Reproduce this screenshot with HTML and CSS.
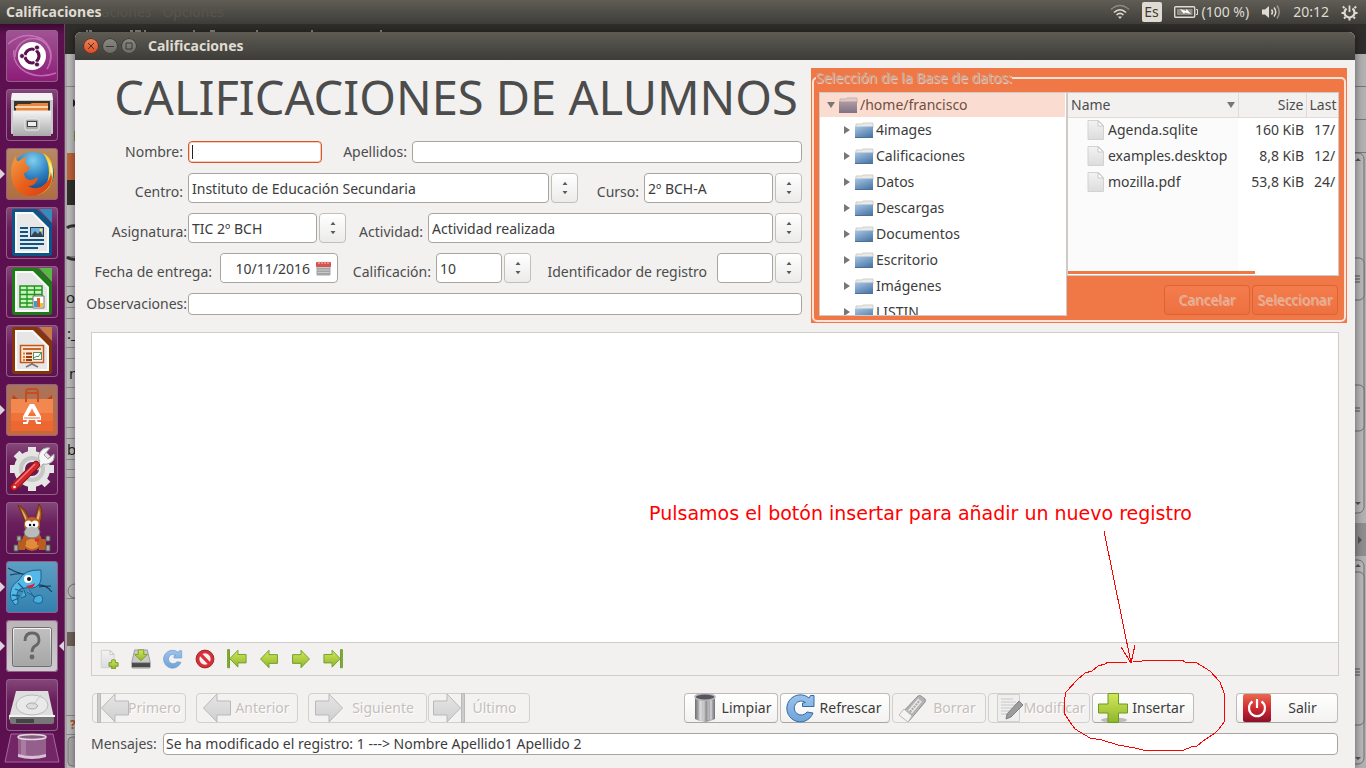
FILE: index.html
```html
<!DOCTYPE html>
<html lang="es">
<head>
<meta charset="utf-8">
<title>Calificaciones</title>
<link rel="stylesheet" href="styles.css">
</head>
<body>
<svg class="defs" aria-hidden="true">
  <defs>
    <linearGradient id="gFolder" x1="0" y1="0" x2="0.6" y2="1"><stop offset="0" stop-color="#a9c6e2"/><stop offset="1" stop-color="#4f7bab"/></linearGradient>
    <linearGradient id="gFolderSel" x1="0" y1="0" x2="0" y2="1"><stop offset="0" stop-color="#b09aa2"/><stop offset="1" stop-color="#7f7382"/></linearGradient>
    <linearGradient id="gFile" x1="0" y1="0" x2="0" y2="1"><stop offset="0" stop-color="#f3f3f3"/><stop offset="1" stop-color="#dcdcdc"/></linearGradient>
    <linearGradient id="gGreen" x1="0" y1="0" x2="0" y2="1"><stop offset="0" stop-color="#d2e85c"/><stop offset="1" stop-color="#8fb52b"/></linearGradient>
    <linearGradient id="gGrey" x1="0" y1="0" x2="0" y2="1"><stop offset="0" stop-color="#e6e6e6"/><stop offset="1" stop-color="#cfcfcf"/></linearGradient>
    <linearGradient id="gBlue" x1="0" y1="0" x2="0" y2="1"><stop offset="0" stop-color="#9dc3ea"/><stop offset="1" stop-color="#6fa3da"/></linearGradient>
    <linearGradient id="gMetal" x1="0" y1="0" x2="1" y2="0"><stop offset="0" stop-color="#6c6c72"/><stop offset="0.3" stop-color="#d8d8da"/><stop offset="0.6" stop-color="#8d8d92"/><stop offset="0.8" stop-color="#c2c2c6"/><stop offset="1" stop-color="#707076"/></linearGradient>
    <linearGradient id="gSilver" x1="0" y1="0" x2="0" y2="1"><stop offset="0" stop-color="#f4f4f4"/><stop offset="1" stop-color="#a9a9a9"/></linearGradient>
    <linearGradient id="gRed" x1="0" y1="0" x2="0" y2="1"><stop offset="0" stop-color="#e86a52"/><stop offset="0.5" stop-color="#d02a30"/><stop offset="1" stop-color="#8c0f2a"/></linearGradient>
    <linearGradient id="gFox" x1="0" y1="0" x2="1" y2="1"><stop offset="0" stop-color="#f0a045"/><stop offset="0.5" stop-color="#e9601c"/><stop offset="1" stop-color="#d83a10"/></linearGradient>
    <radialGradient id="gGlobe" cx="0.5" cy="0.2" r="0.8"><stop offset="0" stop-color="#7fd0ee"/><stop offset="0.5" stop-color="#2a7fc0"/><stop offset="1" stop-color="#153a7a"/></radialGradient>
    <symbol id="folder" viewBox="0 0 20 17"><path d="M2 6V2h6l1-1h10v5z" fill="#e9e9e7" stroke="#cfcfcc" stroke-width="1"/><path d="M1 4.500h18V16H1z" fill="url(#gFolder)"/><path d="M1 15.500h18" stroke="#4c6f99"/></symbol>
    <symbol id="folder-sel" viewBox="0 0 20 17"><path d="M2 6V2h6l1-1h10v5z" fill="#dccac6" stroke="#c7b2b0"/><path d="M1 4.500h18V16H1z" fill="url(#gFolderSel)"/></symbol>
    <symbol id="file" viewBox="0 0 17 20"><path d="M1 .5h10.500l5 5v14H1z" fill="url(#gFile)" stroke="#d2d2d2"/><path d="M11 1v5h5.500z" fill="#fff" stroke="#c8c8c8"/></symbol>
    <symbol id="spin" viewBox="0 0 8 14"><path d="M1.500 4L4 .8 6.500 4z" fill="#5c5c5c"/><path d="M1.500 10L4 13.200 6.500 10z" fill="#5c5c5c"/></symbol>
    <symbol id="arrow-l" viewBox="0 0 30 30"><path d="M1.500 15L15 1v7h13.500v14H15v7z"/></symbol>
    <symbol id="arrow-r" viewBox="0 0 30 30"><path d="M28.500 15L15 1v7H1.500v14H15v7z"/></symbol>
    <symbol id="refresh" viewBox="0 0 30 30"><path d="M23 5l1.500-2.500H28V13.500H16.500V10l3-.5A7 7 0 1 0 21 19l6 1A13.500 13.500 0 1 1 23 5z"/></symbol>
  </defs>
</svg>

<header class="panel">
  <span class="panel-title">Calificaciones</span>
  <span class="panel-menu" aria-hidden="true">aciones &nbsp; Opciones</span>
  <div class="indicators">
    <svg width="20" height="16" viewBox="0 0 20 16" fill="none" stroke="#dfdbd2" stroke-width="1.600"><path d="M1 5.500Q10-2.500 19 5.500" opacity=".4"/><path d="M4 8.500Q10 3 16 8.500"/><path d="M6.500 11Q10 7.800 13.500 11"/><path d="M8 12.500h4L10 15z" fill="#dfdbd2" stroke="none"/></svg>
    <span class="keyboard">Es</span>
    <span class="battery"><svg width="24" height="14" viewBox="0 0 24 14"><rect x=".7" y="1.700" width="20" height="10.600" rx="1" fill="none" stroke="#dfdbd2" stroke-width="1.400"/><rect x="3" y="4" width="15.500" height="6" fill="#8d8b84"/><path d="M22 4.500h1.500v5H22" fill="none" stroke="#dfdbd2"/><path d="M6 4l6 2 .5-2L17 9l-6-1.500L10 9z" fill="#fff"/></svg>(100 %)</span>
    <svg width="20" height="16" viewBox="0 0 20 16"><path d="M1 5.500h3L8 2v12l-4-3.500H1z" fill="#dfdbd2"/><g fill="none" stroke="#dfdbd2" stroke-width="1.500"><path d="M10.500 5.500q2 2.500 0 5"/><path d="M13 3.500q3.500 4.500 0 9"/><path d="M16 1.500q4.500 6.500 0 13" opacity=".5"/></g></svg>
    <time>20:12</time>
    <svg width="17" height="17" viewBox="0 0 17 17" fill="none" stroke="#dfdbd2"><path d="M5.500 4.500a5 5 0 1 0 6 0" stroke-width="2.200"/><path d="M8.500 1.500v6.500" stroke-width="1.800"/><path d="M3.500 4L1.800 2.500M13.500 4l1.700-1.500M3 9H.5M14 9h2.500M4.500 13L3 14.500M12.500 13l1.500 1.500M8.500 14v2.500" stroke-width="2"/></svg>
  </div>
</header>

<div class="desktop">
  <nav class="launcher" aria-label="Lanzador">
    <button class="tile dash" aria-label="Inicio"><svg viewBox="0 0 52 52"><g fill="none" stroke="#d488c4" stroke-width="1.500" opacity=".7"><path d="M9 27a18 18 0 0 1 31-13q9 12 1 25"/><path d="M2 14q16-14 34-5 12 9 8 23"/><path d="M50 43q-16 6-30-1Q6 34 8 20"/></g><circle cx="26" cy="26" r="14" fill="#fff"/><circle cx="26" cy="26" r="7" fill="none" stroke="#5e1150" stroke-width="3.200"/><path d="M26 26L15 26M26 26L31 17M26 26L31 35" stroke="#fff" stroke-width="1.500"/><circle cx="26" cy="26" r="5" fill="#fff"/><g fill="#5e1150" stroke="#fff" stroke-width=".8"><circle cx="16" cy="26" r="2.500"/><circle cx="31" cy="17.500" r="2.500"/><circle cx="31" cy="34.500" r="2.500"/></g></svg></button>
    <button class="tile" aria-label="Archivos"><svg viewBox="0 0 52 52"><path d="M6 4h40l1 8v32q0 1-1 1H6q-1 0-1-1V12z" fill="#c9c9c9"/><path d="M6 4h40l1 7H5z" fill="#f2f2f2"/><path d="M8 12h36v11H8z" fill="#373430"/><path d="M10 17l2-2h12l2-1h16v9H10z" fill="#e8863c"/><path d="M9 18h33" stroke="#fff0d5" stroke-width="1.500"/><path d="M7 22h38v25H7z" fill="url(#gSilver)"/><path d="M7 22h38" stroke="#eee"/><rect x="19" y="30" width="14" height="11" rx="2" fill="#aaa" stroke="#eee"/><rect x="21.500" y="32.500" width="9" height="5" fill="#eee" stroke="#444"/></svg></button>
    <button class="tile tan running" aria-label="Firefox"><svg viewBox="0 0 52 52"><circle cx="27" cy="25" r="21" fill="url(#gGlobe)"/><path d="M37 5q11 6 10 22-1 16-16 20 12-9 12-22 0-12-6-20z" fill="#f9d038"/><path d="M42 12q8 10 2 22 2-12-2-22z" fill="#fff6a0"/><path d="M10 8q-1 5 3 5 3-3 8-4-3 4-1 7 1 2 4 3-2 5-6 6 0 5 5 7 5 0 8-3 2 2-1 5-2 4-8 4 10 6 19-4 3-3 4-10 3 10-4 17-7 7-16 7-13 0-18-12Q2 19 10 8z" fill="url(#gFox)"/></svg></button>
    <button class="tile" aria-label="LibreOffice Writer"><svg viewBox="0 0 52 52"><path d="M8 2h23l15 15v29q0 3-3 3H9q-3 0-3-3V4q0-2 2-2z" fill="#0d5584"/><path d="M33 2h13v14z" fill="#338dbc"/><path d="M9 5h18l16 16v25H9z" fill="#fafafa"/><path d="M11 7h15l15 15v22H11z" fill="#e8e8e8"/><path d="M14 21h8M14 25h8M14 29h8M14 33h24M14 37h24M14 41h18" stroke="#0d5584" stroke-width="1.800"/><rect x="24.500" y="20.500" width="13" height="9" fill="#6db2de" stroke="#263c55"/><path d="M25 29l4-5 3 3 2-3 3 5z" fill="#34434c"/><circle cx="35" cy="23" r="1.500" fill="#ffe14b"/></svg></button>
    <button class="tile" aria-label="LibreOffice Calc"><svg viewBox="0 0 52 52"><path d="M8 2h23l15 15v29q0 3-3 3H9q-3 0-3-3V4q0-2 2-2z" fill="#1c7d14"/><path d="M33 2h13v14z" fill="#55b944"/><path d="M9 5h18l16 16v25H9z" fill="#fafafa"/><path d="M11 7h15l15 15v22H11z" fill="#e6e6e6"/><path d="M14 20h22v21H14z" fill="#c8f5b8" stroke="#1e9320" stroke-width="1.500"/><path d="M14 24h22M14 28.500h22M14 33h22M14 37h22M21 20v21M28.500 20v21" stroke="#1e9320" stroke-width="1.300"/><path d="M27 30h11v12H27z" fill="#fff" stroke="#777"/><path d="M28 35h3v6h-3z" fill="#2fa0e0"/><path d="M31 32h3v9h-3z" fill="#e66020"/><path d="M34 37h3v4h-3z" fill="#f5c22a"/></svg></button>
    <button class="tile" aria-label="LibreOffice Impress"><svg viewBox="0 0 52 52"><path d="M8 2h23l15 15v29q0 3-3 3H9q-3 0-3-3V4q0-2 2-2z" fill="#853509"/><path d="M33 2h13v14z" fill="#c67b45"/><path d="M9 5h18l16 16v25H9z" fill="#fafafa"/><path d="M11 7h15l15 15v22H11z" fill="#e6e6e6"/><rect x="14.500" y="20.500" width="23" height="17" fill="#fbe6d4" stroke="#c4561c" stroke-width="1.500"/><path d="M17 24h18" stroke="#c4561c" stroke-width="1.800"/><path d="M17 28.500h2M17 32h2M17 35h2" stroke="#e47a38" stroke-width="2"/><path d="M20 28.500h6M20 32h6M20 35h6" stroke="#9c3b0c" stroke-width="1.800"/><rect x="27.500" y="27.500" width="8" height="7" fill="#fff" stroke="#668a66"/><path d="M28 33l3-2 1 1 3-4" stroke="#21a038" fill="none"/><path d="M26 38v2M26 39l-6 3M26 39l6 3" stroke="#777" stroke-width="1.800"/></svg></button>
    <button class="tile orange running" aria-label="Software de Ubuntu"><svg viewBox="0 0 52 52"><path d="M7 11l5 4h29l5-4v6H6z" fill="#b7441c"/><path d="M5 15h42v32H5z" fill="#f0713a"/><path d="M5 15h42v14H5z" fill="#f28750"/><path d="M5 37h42v10H5z" fill="#ee6730"/><path d="M20 18V9q0-4 3-4h6q3 0 3 4v9M20 9h12" stroke="#c54d24" stroke-width="2" fill="none"/><path d="M19 33L25 22h2l6 11" fill="none" stroke="#fff" stroke-width="4"/><path d="M17 34h18" stroke="#fff" stroke-width="4"/><path d="M18 34h16" stroke="#f0713a"/><path d="M17 39h4l1-3M35 39h-4l-1-3" stroke="#fff" stroke-width="2" fill="none"/></svg></button>
    <button class="tile" aria-label="Configuración del sistema"><svg viewBox="0 0 52 52"><g stroke="#e5e5e4" stroke-width="8"><path d="M26 4v11M26 37v11M4 26h11M37 26h11M10.500 10.500l7 7M34.500 34.500l7 7M10.500 41.500l7-7M34.500 17.500l7-7"/></g><circle cx="26" cy="26" r="12.500" fill="none" stroke="#e5e5e4" stroke-width="11"/><circle cx="26" cy="26" r="11" fill="none" stroke="#c6c6c5" stroke-width="4"/><path d="M28 25l6-6q-4-7 3-13 4-2 7-1l-6 7 4 4 6-5q1 7-4 9-4 2-7 1l-5 6z" fill="#f7f7f7" stroke="#a6a6a6"/><path d="M8 44L30 22" stroke="#8a0f16" stroke-width="8" stroke-linecap="round"/><path d="M8 44L30 22" stroke="#d6262c" stroke-width="6" stroke-linecap="round"/><path d="M9 41L29 21" stroke="#f08080" stroke-width="1.500"/><circle cx="8.500" cy="44" r="1.300" fill="#fff"/></svg></button>
    <button class="tile" aria-label="aMule"><svg viewBox="0 0 52 52"><path d="M20 22L12 3q8 3 12 17zM28 20L33 2q6 8 0 21z" fill="#a9581f" stroke="#6b330d"/><path d="M20 19L15 7q4 4 6 11zM30 19l3-12q2 6-1 12z" fill="#e0b68c"/><ellipse cx="26" cy="39" rx="10" ry="10" fill="#bc5f22"/><ellipse cx="26" cy="42" rx="7" ry="5" fill="#e08c3e"/><path d="M12 37h8v6h-8zM31 37h9v6h-9zM9 43h10v5H9zM33 43h10v5H33z" fill="#b85c20"/><path d="M11 34h4v5h-4zM40 34h4v5h-4zM8 43h4v6H8zM40 43h4v6h-4z" fill="#aaa" stroke="#555"/><ellipse cx="26" cy="23" rx="8" ry="8" fill="#bc5f22"/><path d="M22 23h9l3 7q-1 6-8 6t-8-6z" fill="#bbb" stroke="#777"/><circle cx="22.500" cy="22" r="3.500" fill="#fff"/><circle cx="29" cy="22" r="3.500" fill="#fff"/><circle cx="24" cy="23" r="1.200"/><circle cx="28" cy="23" r="1.200"/><ellipse cx="31" cy="38" rx="2.500" ry="1.800" fill="#dc2935"/></svg></button>
    <button class="tile blue running" aria-label="Gambas"><svg viewBox="0 0 52 52"><path d="M2 7q14 8 28 8M4 14q12-3 22 1M30 24q10-1 16 7M33 26q8-1 12-1" fill="none" stroke="#113e57" stroke-width="1.100"/><path d="M35 9q-17-1-22 10Q2 26 5 38l4 6q4-1 3-4-3-8 2-12 6-2 12-1 8-1 9-9z" fill="#55b8e6" stroke="#18638f"/><path d="M9 28l8 3M6 34l8 1M12 22l6 6M6 40l7-3" stroke="#18638f" stroke-width="1.300"/><path d="M18 29l2 6-5 2M23 29l5 7 6-2q4 2 2 7-4 3-9-1l2-4-8-5" fill="#4aaedc" stroke="#18638f"/><circle cx="22" cy="18" r="4" fill="#fff"/><circle cx="23" cy="18" r="2" fill="#111"/><path d="M20 25q5 0 9-3-1 5-6 5z" fill="#e3202a"/></svg></button>
    <button class="tile light running active" aria-label="Calificaciones"><svg viewBox="0 0 52 52"><rect x="6.500" y="7.500" width="39" height="39" rx="2" fill="url(#gSilver)" stroke="#6e6e6e"/><rect x="8" y="9" width="36" height="36" fill="#a5a5a5" opacity=".65"/><path d="M19 21q0-8 7-8t7 7q0 4-4 6-3 2-3 6" fill="none" stroke="#666" stroke-width="2.800"/><circle cx="26" cy="37" r="2.400" fill="#666"/></svg></button>
    <button class="tile" aria-label="Disco"><svg viewBox="0 0 52 52"><path d="M10 12h32l6 27-2 5H5l-2-5z" fill="#dedede"/><path d="M4 38h44v5q0 2-2 2H6q-2 0-2-2z" fill="#777"/><path d="M3 36h46v2H3z" fill="#f4f4f4"/><path d="M10 40h18v4H10z" fill="#444"/><ellipse cx="26" cy="26" rx="16" ry="10" fill="#e9e9e9" stroke="#bbb"/><ellipse cx="26" cy="27" rx="5.500" ry="3" fill="#ddd" stroke="#aaa"/><path d="M35 16l-8 10" stroke="#c6c6c6"/></svg></button>
    <button class="trash" aria-label="Papelera"><svg viewBox="0 0 56 30"><path d="M7 1h42l6 28H1z" fill="#742566" stroke="#a4679a"/><path d="M14 4h28v19q-14 4-28 0z" fill="#955f8c"/><path d="M17 6h5v16h-5z" fill="#ab7ba3"/><ellipse cx="28" cy="4" rx="14" ry="2.500" fill="#8a5a84" stroke="#ddd" stroke-width="1.500"/><path d="M14 21q14 4 28 0v3q-14 4-28 0z" fill="#d6c2d4"/></svg></button>
  </nav>

  <div class="workspace">
    <svg class="behind behind-left" width="12" height="744" aria-hidden="true">
      <rect y="30" width="12" height="714" fill="#bdbdbd"/><path d="M1 30v714" stroke="#8f8f8f"/><path d="M0 62.500h12M1 232.500h11M1 262.500h11M1 283.500h11M1 294.500h11M1 323.500h11M1 334.500h11M1 363.500h11M1 374.500h11M1 403.500h11M1 414.500h11M1 435.500h11M1 445.500h11M1 453.500h11M1 574.500h11M1 691.500h11M1 710.500h11" stroke="#8b8b8b"/>
      <path d="M8 75l4 4-4 4z" fill="#222"/><rect x="9" y="107" width="3" height="10" fill="#7aa042"/><rect x="2" y="129" width="10" height="27" fill="#bf6339"/><rect x="2" y="156" width="10" height="25" fill="#31302c"/><path d="M12 202q-7-1-10 2M12 235q-7 1-10-2" stroke="#333" stroke-width="3" fill="none"/><circle cx="10" cy="567" r="7" fill="none" stroke="#777"/><rect x="2" y="608" width="8" height="14" fill="#71615a"/><rect x="3" y="713" width="14" height="29" rx="4" fill="#aaa" stroke="#777"/>
      <g class="behind-text"><text x="1" y="279">o</text><text x="2" y="315">:_</text><text x="4" y="355">n</text><text x="2" y="431">b</text></g><text x="5" y="705" class="behind-mark">?</text>
    </svg>
    <svg class="behind behind-right" width="12" height="744" aria-hidden="true">
      <rect y="30" width="12" height="714" fill="#b2b2b2"/><path d="M0 62.500h12M0 95.500h12M0 128.500h12M0 499.500h12" stroke="#777"/><rect y="499" width="12" height="33" fill="#8e8e8e"/><g fill="#b8b8b8" stroke="#6f6f6f"><rect x="-6" y="129" width="16" height="360" rx="6"/><rect x="-6" y="234" width="16" height="42" rx="5"/><rect x="-6" y="361" width="16" height="46" rx="5"/><rect x="-6" y="536" width="16" height="204" rx="6"/><rect x="-6" y="548" width="16" height="153" rx="5"/></g><path d="M1 252h5M1 255h5M1 258h5M1 384h5M1 387h5M1 645h5M1 648h5M1 651h5" stroke="#555"/><path d="M1 137h6l-3-3zM1 478h6l-3 3zM4 512v8l4-4zM1 543h6l-3-3zM1 733h6l-3 3z" fill="#555"/>
    </svg>
    <svg class="behind behind-title" width="400" height="8" aria-hidden="true"><path d="M21 7h2M24 7h3M65 7h3M70 7h6M79 7h2M128 7h2M145 7h5M191 7h2M246 7h2M315 7h2" stroke="#918f88" stroke-width="2"/></svg>

    <main class="window">
      <div class="titlebar">
        <button class="wm close" aria-label="Cerrar"><svg viewBox="0 0 16 16"><path d="M5 5l6 6M11 5l-6 6"/></svg></button>
        <button class="wm" aria-label="Minimizar"><svg viewBox="0 0 16 16"><path d="M4 8.500h8"/></svg></button>
        <button class="wm" aria-label="Maximizar"><svg viewBox="0 0 16 16"><path d="M5 5h6v6H5z"/></svg></button>
        <span class="window-title">Calificaciones</span>
      </div>

      <div class="top">
        <form class="form">
          <h1>CALIFICACIONES DE ALUMNOS</h1>
          <div class="row">
            <label class="first" for="nombre">Nombre:</label>
            <span class="focus w-name"><input id="nombre"></span>
            <label class="l-apellidos" for="apellidos">Apellidos:</label>
            <input class="grow" id="apellidos">
          </div>
          <div class="row tall">
            <label class="first" for="centro">Centro:</label>
            <span class="combo grow"><input id="centro" value="Instituto de Educación Secundaria"><button type="button" aria-label="Elegir centro"><svg><use href="#spin"/></svg></button></span>
            <label class="l-curso" for="curso">Curso:</label>
            <span class="combo w-combo"><input id="curso" value="2º BCH-A"><button type="button" aria-label="Elegir curso"><svg><use href="#spin"/></svg></button></span>
          </div>
          <div class="row tall">
            <label class="first tight" for="asignatura">Asignatura:</label>
            <span class="combo w-combo"><input id="asignatura" value="TIC 2º BCH"><button type="button" aria-label="Elegir asignatura"><svg><use href="#spin"/></svg></button></span>
            <label class="l-actividad" for="actividad">Actividad:</label>
            <span class="combo grow"><input id="actividad" value="Actividad realizada"><button type="button" aria-label="Elegir actividad"><svg><use href="#spin"/></svg></button></span>
          </div>
          <div class="row tall">
            <label class="l-fecha" for="fecha">Fecha de entrega:</label>
            <span class="date"><input id="fecha" value="10/11/2016"><button type="button" aria-label="Calendario"><svg width="15" height="15" viewBox="0 0 15 15"><rect x=".5" y="1" width="14" height="13.500" rx="1" fill="#a5a5a5"/><path d="M1.500 6.500h12M1.500 9h12M1.500 11.500h12" stroke="#c9c9c9"/><rect width="15" height="5" rx="1" y="1" fill="#d4544f"/><path d="M3 0v3M6 0v3M9 0v3M12 0v3" stroke="#f3c9c6"/></svg></button></span>
            <label class="l-calif" for="calif">Calificación:</label>
            <span class="combo w-calif"><input id="calif" value="10"><button type="button" aria-label="Elegir calificación"><svg><use href="#spin"/></svg></button></span>
            <label class="l-ident" for="ident">Identificador de registro</label>
            <span class="combo grow"><input id="ident"><button type="button" aria-label="Elegir registro"><svg><use href="#spin"/></svg></button></span>
          </div>
          <div class="row">
            <label class="first tight" for="obs">Observaciones:</label>
            <input class="grow" id="obs">
          </div>
        </form>

        <section class="chooser">
          <fieldset>
            <legend>Selección de la Base de datos:</legend>
            <div class="panes">
              <ul class="tree">
                <li class="root"><svg class="tri" viewBox="0 0 8 8"><path d="M0 1h8L4 7z"/></svg><svg class="folder"><use href="#folder-sel"/></svg>/home/francisco</li>
                <li><svg class="tri" viewBox="0 0 8 8"><path d="M1 0v8l6-4z"/></svg><svg class="folder"><use href="#folder"/></svg>4images</li>
                <li><svg class="tri" viewBox="0 0 8 8"><path d="M1 0v8l6-4z"/></svg><svg class="folder"><use href="#folder"/></svg>Calificaciones</li>
                <li><svg class="tri" viewBox="0 0 8 8"><path d="M1 0v8l6-4z"/></svg><svg class="folder"><use href="#folder"/></svg>Datos</li>
                <li><svg class="tri" viewBox="0 0 8 8"><path d="M1 0v8l6-4z"/></svg><svg class="folder"><use href="#folder"/></svg>Descargas</li>
                <li><svg class="tri" viewBox="0 0 8 8"><path d="M1 0v8l6-4z"/></svg><svg class="folder"><use href="#folder"/></svg>Documentos</li>
                <li><svg class="tri" viewBox="0 0 8 8"><path d="M1 0v8l6-4z"/></svg><svg class="folder"><use href="#folder"/></svg>Escritorio</li>
                <li><svg class="tri" viewBox="0 0 8 8"><path d="M1 0v8l6-4z"/></svg><svg class="folder"><use href="#folder"/></svg>Imágenes</li>
                <li><svg class="tri" viewBox="0 0 8 8"><path d="M1 0v8l6-4z"/></svg><svg class="folder"><use href="#folder"/></svg>LISTIN</li>
              </ul>
              <div class="side">
                <div class="files">
                  <table>
                    <colgroup><col class="c-name"><col class="c-size"><col class="c-last"></colgroup>
                    <thead><tr><th><span class="sort">Name <svg class="tri" viewBox="0 0 8 8"><path d="M0 1h8L4 7z"/></svg></span></th><th class="num">Size</th><th>Last</th></tr></thead>
                    <tbody>
                      <tr><td><span class="entry"><svg class="file"><use href="#file"/></svg>Agenda.sqlite</span></td><td class="num">160 KiB</td><td class="last">17/</td></tr>
                      <tr><td><span class="entry"><svg class="file"><use href="#file"/></svg>examples.desktop</span></td><td class="num">8,8 KiB</td><td class="last">12/</td></tr>
                      <tr><td><span class="entry"><svg class="file"><use href="#file"/></svg>mozilla.pdf</span></td><td class="num">53,8 KiB</td><td class="last">24/</td></tr>
                      <tr class="rest"><td></td><td></td><td></td></tr>
                    </tbody>
                  </table>
                  <div class="scroll"></div>
                </div>
                <div class="actions"><button disabled>Cancelar</button><button disabled>Seleccionar</button></div>
              </div>
            </div>
          </fieldset>
        </section>
      </div>

      <section class="records">
        <div class="grid"></div>
        <div class="toolbar">
          <button aria-label="Nuevo"><svg viewBox="0 0 22 22"><path d="M2.500 1.500h10l4 4v15h-14z" fill="url(#gFile)" stroke="#d0d0d0"/><path d="M12 2v4h4.500z" fill="#fff" stroke="#c5c5c5"/><path d="M14 12h4v3h3v4h-3v3h-4v-3h-3v-4h3z" fill="url(#gGreen)" stroke="#6f9620"/></svg></button>
          <button aria-label="Guardar"><svg viewBox="0 0 22 22"><path d="M4 1h14l3 13v6q0 1-1 1H2q-1 0-1-1v-6z" fill="#c9c9c9" stroke="#999"/><path d="M1 15h20v5H1z" fill="#4a4a4a"/><path d="M2 15h18" stroke="#999"/><path d="M8 1h6v5h4l-7 7-7-7h4z" fill="url(#gGreen)" stroke="#7a9e28"/></svg></button>
          <button aria-label="Refrescar"><svg viewBox="0 0 30 30" fill="url(#gBlue)" stroke="#6b9cd0"><use href="#refresh" width="30" height="30"/></svg></button>
          <button aria-label="Cancelar"><svg viewBox="0 0 22 22"><circle cx="11" cy="11" r="9.800" fill="#d83038" stroke="#9c1a22"/><circle cx="11" cy="11" r="6.200" fill="#f6f0f0"/><path d="M6 6l10 10" stroke="#d83038" stroke-width="3.500"/></svg></button>
          <button aria-label="Primero"><svg viewBox="0 0 32 32" fill="url(#gGreen)" stroke="#6f9c28" stroke-width="1.500"><path d="M1 1h3v29H1z" fill="#83ad3a"/><use href="#arrow-l" x="3" y="1" width="29" height="29"/></svg></button>
          <button aria-label="Anterior"><svg viewBox="0 0 32 32" fill="url(#gGreen)" stroke="#6f9c28" stroke-width="1.500"><use href="#arrow-l" x="1" y="1" width="30" height="30"/></svg></button>
          <button aria-label="Siguiente"><svg viewBox="0 0 32 32" fill="url(#gGreen)" stroke="#6f9c28" stroke-width="1.500"><use href="#arrow-r" x="1" y="1" width="30" height="30"/></svg></button>
          <button aria-label="Último"><svg viewBox="0 0 32 32" fill="url(#gGreen)" stroke="#6f9c28" stroke-width="1.500"><path d="M28 1h3v29h-3z" fill="#83ad3a"/><use href="#arrow-r" y="1" width="29" height="29"/></svg></button>
        </div>
      </section>

      <div class="commands">
        <div class="nav-group">
          <button class="cmd w-s" disabled><svg viewBox="0 0 30 30" fill="url(#gGrey)" stroke="#b9b9b9"><path d="M-.5.500h3v29h-3z" fill="#ccc"/><use href="#arrow-l" x="2" width="30" height="30"/></svg><span>Primero</span></button>
          <button class="cmd" disabled><svg viewBox="0 0 30 30" fill="url(#gGrey)" stroke="#b9b9b9"><use href="#arrow-l" width="30" height="30"/></svg><span>Anterior</span></button>
          <button class="cmd w-l" disabled><svg viewBox="0 0 30 30" fill="url(#gGrey)" stroke="#b9b9b9"><use href="#arrow-r" width="30" height="30"/></svg><span>Siguiente</span></button>
          <button class="cmd joined" disabled><svg viewBox="0 0 30 30" fill="url(#gGrey)" stroke="#b9b9b9"><path d="M27.500.500h3v29h-3z" fill="#ccc"/><use href="#arrow-r" x="-2" width="30" height="30"/></svg><span>Último</span></button>
        </div>
        <div class="edit-group">
          <button class="cmd w-s"><svg viewBox="0 0 30 30"><path d="M5 4h20v22q-10 6-20 0z" fill="url(#gMetal)"/><path d="M10 7v20M14 8v20M18 8v19M21 7v19" stroke="#f0f0f2" opacity=".5"/><ellipse cx="15" cy="4" rx="10" ry="3.200" fill="#55555b" stroke="#b5b5b9" stroke-width="1.500"/></svg><span>Limpiar</span></button>
          <button class="cmd w-m"><svg viewBox="0 0 30 30" fill="url(#gBlue)" stroke="#2f6cab"><use href="#refresh" width="30" height="30"/></svg><span>Refrescar</span></button>
          <button class="cmd w-s" disabled><svg viewBox="0 0 30 30"><path d="M20 3q2-1 3 0l4 3q1 1 0 3L11 28l-9-6z" fill="#b4b4b4" stroke="#909090"/><path d="M1 22l5-6 8 7-4 6z" fill="#f4f4f4" stroke="#bbb"/><path d="M12 19L22 7" stroke="#e8e8e8" stroke-width="5"/><path d="M12 19L22 7" stroke="#aaa" stroke-width="2" stroke-dasharray="2 1"/></svg><span>Borrar</span></button>
          <button class="cmd" disabled><svg viewBox="0 0 30 30"><path d="M3.500 1.500h22v27h-22z" fill="#efefef" stroke="#d0d0d0"/><path d="M7 6h12M7 9h15M7 12h15M7 15h12M7 18h9M7 21h7" stroke="#c8c8c8"/><path d="M25 8l4 4-12 12-5 2 1-5z" fill="#9c9c9c" stroke="#808080"/></svg><span>Modificar</span></button>
          <button class="cmd"><svg viewBox="0 0 30 30"><ellipse cx="16" cy="27" rx="13" ry="2.500" fill="#bbb"/><path d="M10 .5h10.500V11H29.500v9h-9v9.500H10V20H.5v-9H10z" fill="url(#gGreen)" stroke="#6b9a20"/></svg><span>Insertar</span></button>
          <button class="cmd exit"><svg viewBox="0 0 30 30"><rect x="1" y="1" width="28" height="28" rx="2" fill="url(#gRed)"/><path d="M10.500 8.500a8 8 0 1 0 9 0" fill="none" stroke="#fff" stroke-width="2.200"/><path d="M15 6v9" stroke="#fff" stroke-width="2.200"/></svg><span>Salir</span></button>
        </div>
      </div>

      <div class="messages">
        <label for="mensajes">Mensajes:</label>
        <input id="mensajes" value="Se ha modificado el registro: 1 ---&gt; Nombre Apellido1 Apellido 2">
      </div>

      <div class="note">
        <p>Pulsamos el botón insertar para añadir un nuevo registro</p>
        <svg width="164" height="224" viewBox="0 0 164 224" shape-rendering="crispEdges"><path d="M43 1L70 133M60 117L70 133 74 115M66 132H47L44 134 37 136 31 141 24 143 16 150 5 162 3 172V183L9 192 14 199 29 208 41 210 57 215 74 218 82 220H123L130 217 136 216 142 211 154 203 158 199 163 192V163L159 152 149 141 136 133 124 132 121 130H84L81 131H72"/></svg>
      </div>
    </main>
  </div>
</div>
</body>
</html>
```

FILE: styles.css
```css
* { box-sizing: border-box; }
body {
  margin: 0;
  height: 100vh;
  overflow: hidden;
  display: flex;
  flex-direction: column;
  font: 14px/22px "Noto Sans", "Open Sans", sans-serif;
  color: #4c4c4c;
  background: #2f2e2a;
}
button, input { font: inherit; color: inherit; margin: 0; }
button { padding: 0; border: 0; background: none; }
svg { display: block; flex: none; }
.defs { position: absolute; width: 0; height: 0; }

.panel {
  height: 24px;
  flex: none;
  display: flex;
  align-items: center;
  padding: 0 8px 0 6px;
  background: linear-gradient(#5f5d55, #3e3d39);
  color: #dfdbd2;
}
.panel-title { font-weight: bold; }
.panel-menu { color: #57554e; }
.indicators { margin-left: auto; display: flex; align-items: center; gap: 12px; }
.keyboard { background: #dfdbd2; color: #3c3b37; width: 20px; line-height: 20px; text-align: center; border-radius: 2px; }
.battery { display: flex; align-items: center; gap: 4px; }

.desktop { flex: 1; display: flex; min-height: 0; }
.launcher {
  width: 65px;
  flex: none;
  display: flex;
  flex-direction: column;
  align-items: center;
  gap: 7px;
  padding-top: 6px;
  background: linear-gradient(#3d0a33, #5c104f 10px);
  border-right: 1px solid #793a6d;
}
.tile {
  position: relative;
  width: 52px;
  height: 52px;
  flex: none;
  border-radius: 4px;
  background: linear-gradient(#85487a, #6a1f5c 40%, #5b1450);
  box-shadow: inset 0 0 0 1px #93608a;
}
.tile svg { width: 52px; height: 52px; }
.dash { background: linear-gradient(#a05494, #8d1c78); }
.tan { background: linear-gradient(#b98a62, #ad6e40); }
.orange { background: linear-gradient(#a8745c, #c8683a); }
.blue { background: linear-gradient(#5f9fc3, #3180b0); }
.light { background: linear-gradient(#bab4b8, #cfcccf); }
.running::before {
  content: "";
  position: absolute;
  left: -6px;
  top: 21px;
  border: 5px solid transparent;
  border-left-color: #ddd3da;
  border-right: 0;
}
.active::after {
  content: "";
  position: absolute;
  right: -6px;
  top: 21px;
  border: 5px solid transparent;
  border-right-color: #ddd3da;
  border-left: 0;
}
.trash { margin-top: -5px; }
.trash svg { width: 56px; height: 30px; }

.workspace { position: relative; flex: 1; min-width: 0; display: flex; padding: 8px 11px 0 10px; background: #2f2e2a; }
.behind { position: absolute; top: 0; }
.behind-left, .behind-title { left: 0; }
.behind-right { right: 0; }
.behind-text { font-size: 15px; fill: #222; }
.behind-mark { font-size: 12px; font-weight: bold; fill: #b5532a; }

.window {
  position: relative;
  flex: 1;
  min-width: 0;
  display: flex;
  flex-direction: column;
  background: #f2f1f0;
  border-radius: 6px 6px 0 0;
  box-shadow: 0 0 8px rgba(0, 0, 0, 0.5);
}
.titlebar {
  height: 28px;
  flex: none;
  display: flex;
  align-items: center;
  gap: 3px;
  padding: 0 8px;
  border-radius: 6px 6px 0 0;
  background: linear-gradient(#5d5b53, #3d3c38);
  color: #dfdbd2;
}
.wm { width: 16px; height: 16px; border-radius: 50%; background: linear-gradient(#8b8983, #6c6a64); box-shadow: inset 0 0 0 1px #3a3935; }
.wm svg { width: 16px; height: 16px; fill: none; stroke: #3a3935; }
.close { background: linear-gradient(#f4835c, #dc4a1c); }
.window-title { margin-left: 8px; font-weight: bold; }

.top { display: flex; gap: 9px; padding: 8px 8px 0; flex: none; }
.form { flex: 1; min-width: 0; display: flex; flex-direction: column; gap: 10px; }
h1 { margin: 0 0 0 27px; font-size: 47px; line-height: 58px; padding-bottom: 5px; font-weight: normal; text-align: center; white-space: nowrap; }
.row { display: flex; align-items: flex-end; height: 22px; }
.tall { height: 30px; }
.row label { flex: none; text-align: right; padding-right: 5px; white-space: nowrap; }
.row .first { width: 105px; }
.row .tight { padding-right: 1px; }
.row .l-apellidos { width: 90px; }
.row .l-curso { width: 66px; }
.row .l-actividad { width: 82px; }
.row .l-fecha { width: 137px; padding-right: 8px; }
.row .l-calif { width: 98px; }
.row .l-ident { width: 186px; padding-right: 10px; }
.row input { height: 100%; min-width: 0; }
.grow { flex: 1; min-width: 0; }
input {
  border: 1px solid #a8a49f;
  border-radius: 4px;
  background: #fff;
  padding: 0 3px;
  color: #3c3c3c;
  outline: 0;
}
.focus { position: relative; height: 100%; display: flex; }
.focus input { width: 100%; border-color: #d4582e; box-shadow: inset 0 0 0 1px #f6cbb9; }
.focus::after { content: ""; position: absolute; left: 4px; top: 4px; width: 1px; height: 14px; background: #222; }
.w-name { width: 134px; }
.w-combo { width: 158px; }
.w-calif { width: 95px; }
.combo { display: flex; gap: 2px; height: 100%; }
.combo input { flex: 1; }
.combo button {
  width: 27px;
  flex: none;
  display: flex;
  align-items: center;
  justify-content: center;
  border: 1px solid #c2bfbb;
  border-radius: 4px;
  background: linear-gradient(#fff, #ecebea);
}
.combo svg { width: 8px; height: 14px; }
.date { width: 118px; height: 100%; display: flex; align-items: center; background: #fff; border: 1px solid #a8a49f; border-radius: 4px; padding-right: 6px; }
.date input { border: 0; flex: 1; text-align: right; padding-right: 6px; }

.chooser { width: 536px; height: 255px; flex: none; background: #f07746; padding: 0 1px 1px; }
fieldset { margin: 0; height: 100%; min-width: 0; border: 2px solid #f7e2d8; border-radius: 5px; padding: 4px 5px 0 5px; }
legend { margin-left: -3px; padding: 0; line-height: 20px; color: #c4a596; text-shadow: 1px 1px 0 #f3c3ac; }
.panes { display: flex; height: 224px; }
.tree { width: 248px; flex: none; margin: 0; padding: 0; list-style: none; overflow: hidden; background: #fff; border: 1px solid #cfcac6; color: #3c3c3c; }
.tree li { display: flex; align-items: center; height: 26px; padding-left: 23px; }
.tree .root { height: 24px; margin-right: 1px; padding-left: 7px; background: #fbdcd0; color: #6f4f45; }
.tri { width: 8px; height: 8px; fill: #777; margin-right: 3px; }
.folder { width: 20px; height: 17px; margin-right: 2px; }
.side { flex: 1; min-width: 0; display: flex; flex-direction: column; justify-content: space-between; }
.files { height: 184px; overflow: hidden; background: #fff; border: 1px solid #cfcac6; position: relative; }
table { width: 100%; height: 100%; border-collapse: collapse; table-layout: fixed; color: #3c3c3c; white-space: nowrap; }
.c-name { width: 170px; }
.c-size { width: 68px; }
th { height: 24px; padding: 0 2px 0 3px; font-weight: normal; text-align: left; background: #f2f1f0; color: #4c4c4c; border-bottom: 1px solid #dedbd8; }
th + th { border-left: 1px solid #dedbd8; }
td { height: 26px; padding: 0 2px 0 0; overflow: hidden; }
td:first-child { background: #fbfbfb; }
.num { text-align: right; }
.last { padding-left: 8px; }
.rest td { height: auto; }
.sort { display: flex; align-items: center; justify-content: space-between; }
.sort .tri { margin-right: 1px; }
.entry { display: flex; align-items: center; gap: 4px; padding-left: 19px; }
.file { width: 17px; height: 20px; }
.scroll { position: absolute; left: 0; bottom: 1px; width: 187px; height: 3px; background: #f07746; }
.actions { display: flex; justify-content: flex-end; gap: 2px; padding: 0 1px 1px 0; }
.actions button { width: 86px; height: 30px; border: 1px solid #dc6334; border-radius: 4px; background: linear-gradient(#f47c4c, #ee7040); color: #ddb6a2; text-shadow: 1px 1px 0 #f7a583; }

.records { flex: 1; min-height: 0; margin: 9px 16px 0; display: flex; flex-direction: column; border: 1px solid #cfccc9; }
.grid { flex: 1; background: #fff; border-bottom: 1px solid #cfccc9; }
.toolbar { display: flex; align-items: center; gap: 12px; height: 32px; padding-left: 7px; }
.toolbar svg { width: 20px; height: 20px; }

.commands { display: flex; justify-content: space-between; margin: 17px 17px 0; flex: none; }
.nav-group { display: flex; gap: 10px; }
.edit-group { display: flex; gap: 2px; }
.cmd {
  width: 102px;
  height: 30px;
  display: flex;
  align-items: center;
  padding: 0 4px 0 5px;
  border: 1px solid #bfbcb8;
  border-bottom-color: #a9a6a2;
  border-radius: 4px;
  background: linear-gradient(#fff, #f3f2f1);
  color: #3c3c3c;
}
.cmd svg { width: 30px; height: 30px; overflow: visible; }
.cmd span { flex: 1; display: flex; justify-content: center; white-space: nowrap; min-width: 0; }
.cmd:disabled { color: #c5c0bc; text-shadow: 1px 1px 0 #fff; border-color: #d2d0cd; background: #f3f2f1; }
.w-s { width: 94px; }
.w-m { width: 110px; }
.w-l { width: 119px; }
.joined { margin-left: -9px; }
.exit { margin-left: 40px; }

.messages { display: flex; align-items: center; margin: 10px 17px 13px 16px; flex: none; }
.messages label { width: 72px; }
.messages input { flex: 1; height: 22px; padding: 0 2px; }

.note { position: absolute; right: 130px; bottom: 14px; pointer-events: none; color: #f00; font: 19px/26px "DejaVu Sans", sans-serif; display: flex; flex-direction: column; align-items: flex-end; }
.note p { margin: 0 33px 4px 0; white-space: nowrap; }
.note svg { fill: none; stroke: #f00; }
```
